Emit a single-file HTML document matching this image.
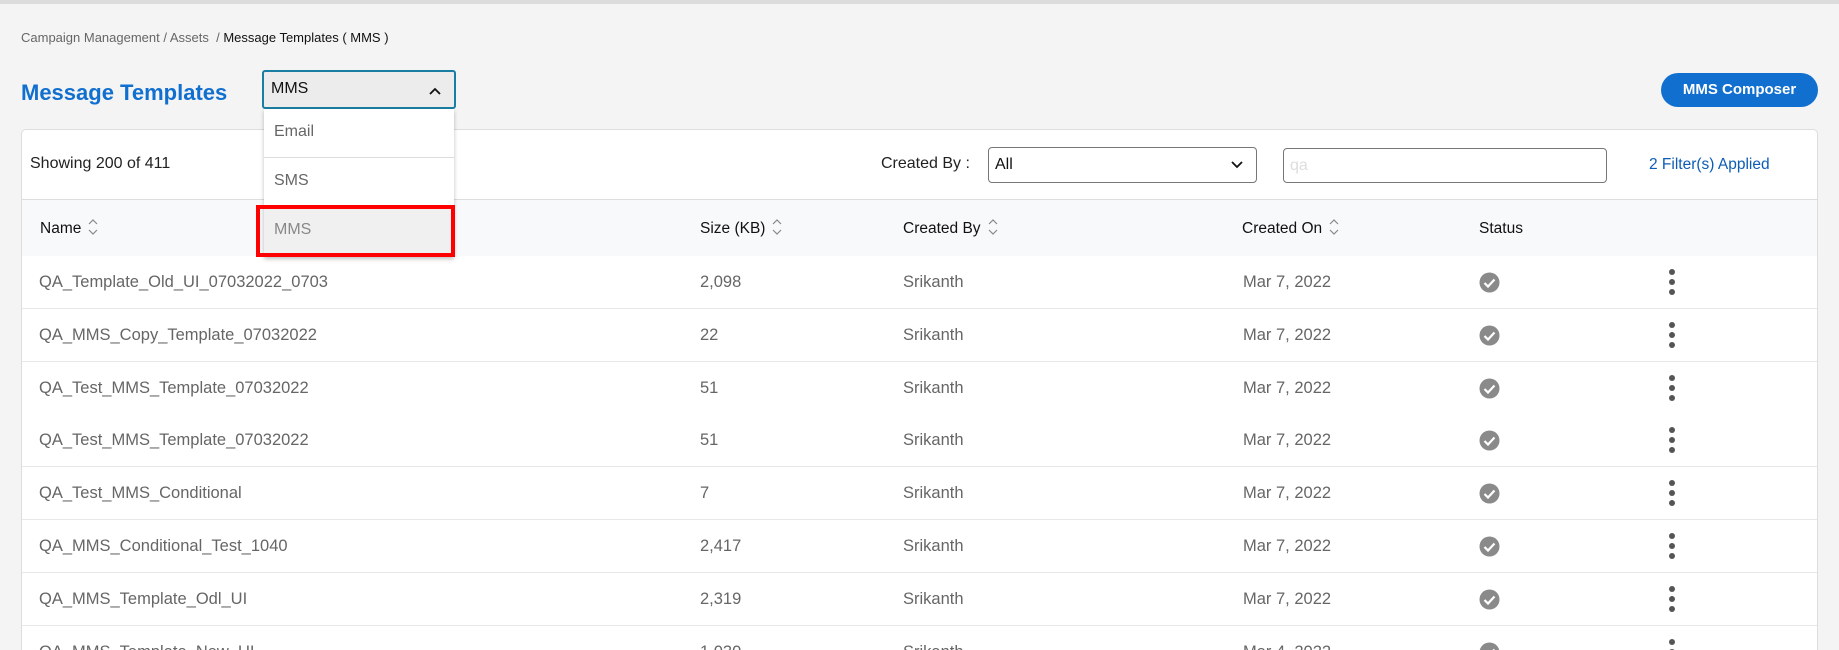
<!DOCTYPE html>
<html><head><meta charset="utf-8"><style>
*{box-sizing:border-box;margin:0;padding:0}
html{width:1839px;height:650px;overflow:hidden}
body{width:1839px;height:650px;overflow:hidden;background:#f4f4f4;font-family:"Liberation Sans",Arial,sans-serif;position:relative}
.topline{position:absolute;left:0;top:0;width:1839px;height:4px;background:#dcdcdc}
.abs{position:absolute}
.crumb{left:21px;top:30px;font-size:13px;color:#666}
.crumb b{color:#111;font-weight:normal}
.title{left:21px;top:80px;font-size:22px;font-weight:bold;color:#1170cf}
.sel{left:262px;top:70px;width:194px;height:39px;border:2px solid #1a7ea3;border-radius:3px;background:#ececec;font-size:16px;color:#111;padding:8px 7px}
.btn{left:1661px;top:73px;width:157px;height:34px;border-radius:17px;background:#1170cf;color:#fff;font-weight:bold;font-size:15px;text-align:center;line-height:34px}
.card{left:21px;top:129px;width:1797px;height:530px;background:#fff;border:1px solid #ddd;border-radius:5px}
.top{position:absolute;left:0;top:0;width:100%;height:70px;border-bottom:1px solid #ddd}
.hdr{position:absolute;left:0;top:70px;width:100%;height:57px;background:#f8f9fb;border-bottom:1px solid #e6e6e6}
.row{position:absolute;left:0;width:100%;height:53px;border-bottom:1px solid #e8e8e8}
.c{position:absolute;font-size:16.5px;color:#666;top:17px}
.h{position:absolute;font-size:15.5px;color:#111;top:20px}
.sort{display:inline-block;vertical-align:middle;margin-left:6px;margin-top:-4px}
.dd{left:264px;top:109px;width:190px;height:148px;background:#fff;box-shadow:0 2px 4px rgba(0,0,0,.25)}
.dd div{height:49px;border-bottom:1px solid #ddd;font-size:16px;color:#666;padding:14px 10px}
</style></head><body>
<div class="topline"></div>
<div class="abs crumb">Campaign Management / Assets &nbsp;/ <b>Message Templates ( MMS )</b></div>
<div class="abs title">Message Templates</div>
<div class="abs btn">MMS Composer</div>
<div class="abs card">
 <div class="top">
  <div class="abs" style="left:8px;top:25px;font-size:16px;color:#222">Showing 200 of 411</div>
  <div class="abs" style="left:859px;top:25px;font-size:16px;color:#222">Created By :</div>
  <div class="abs" style="left:966px;top:17px;width:269px;height:36px;border:1px solid #777;border-radius:4px;padding:8px 6px;font-size:16px;color:#111">All
   <svg class="abs" style="right:12px;top:12px" width="14" height="10" viewBox="0 0 14 10"><path d="M2 2l5 5 5-5" fill="none" stroke="#111" stroke-width="1.8"/></svg></div>
  <div class="abs" style="left:1261px;top:18px;width:324px;height:35px;border:1px solid #777;border-radius:4px;padding:8px 6px;font-size:16px;color:#ddd">qa</div>
  <div class="abs" style="left:1627px;top:26px;font-size:15.5px;color:#0d5cb5">2 Filter(s) Applied</div>
 </div>
 <div class="hdr">
  <div class="h" style="left:18px">Name<svg class="sort" width="12" height="18" viewBox="0 0 12 18"><path d="M2 6l4-4 4 4M2 12l4 4 4-4" fill="none" stroke="#888" stroke-width="1.2"/></svg></div>
  <div class="h" style="left:678px">Size (KB)<svg class="sort" width="12" height="18" viewBox="0 0 12 18"><path d="M2 6l4-4 4 4M2 12l4 4 4-4" fill="none" stroke="#888" stroke-width="1.2"/></svg></div>
  <div class="h" style="left:881px">Created By<svg class="sort" width="12" height="18" viewBox="0 0 12 18"><path d="M2 6l4-4 4 4M2 12l4 4 4-4" fill="none" stroke="#888" stroke-width="1.2"/></svg></div>
  <div class="h" style="left:1220px">Created On<svg class="sort" width="12" height="18" viewBox="0 0 12 18"><path d="M2 6l4-4 4 4M2 12l4 4 4-4" fill="none" stroke="#888" stroke-width="1.2"/></svg></div>
  <div class="h" style="left:1457px">Status</div>
 </div>
</div>
<div id="rows"></div>
<div class="abs sel">MMS<svg class="abs" style="right:12px;top:14px" width="14" height="10" viewBox="0 0 14 10"><path d="M2 8l5-5 5 5" fill="none" stroke="#111" stroke-width="1.8"/></svg></div>
<div class="abs dd"><div>Email</div><div>SMS</div><div style="background:#f0f0f0;border:none;color:#888">MMS</div></div>
<div class="abs" style="left:256px;top:205px;width:199px;height:52px;border:4px solid #f00"></div>
<script>
var d=[["QA_Template_Old_UI_07032022_0703","2,098","Mar 7, 2022"],["QA_MMS_Copy_Template_07032022","22","Mar 7, 2022"],["QA_Test_MMS_Template_07032022","51","Mar 7, 2022"],["QA_Test_MMS_Template_07032022","51","Mar 7, 2022"],["QA_Test_MMS_Conditional","7","Mar 7, 2022"],["QA_MMS_Conditional_Test_1040","2,417","Mar 7, 2022"],["QA_MMS_Template_Odl_UI","2,319","Mar 7, 2022"],["QA_MMS_Template_New_UI","1,030","Mar 4, 2022"]];
var h="";
d.forEach(function(r,i){var t=256+i*52.8;
h+='<div class="abs row" style="left:22px;width:1795px;top:'+t+'px;background:#fff">'+
'<div class="c" style="left:17px">'+r[0]+'</div><div class="c" style="left:678px">'+r[1]+'</div><div class="c" style="left:881px">Srikanth</div><div class="c" style="left:1221px">'+r[2]+'</div>'+
'<svg class="abs" style="left:1457px;top:16px" width="21" height="21" viewBox="0 0 21 21"><circle cx="10.5" cy="10.5" r="10" fill="#8a8a8a"/><path d="M5.5 11l3.5 3.5 6.5-7" fill="none" stroke="#fff" stroke-width="2.2"/></svg>'+
'<svg class="abs" style="left:1646px;top:12px" width="8" height="28" viewBox="0 0 8 28"><circle cx="4" cy="4" r="3" fill="#555"/><circle cx="4" cy="14" r="3" fill="#555"/><circle cx="4" cy="24" r="3" fill="#555"/></svg></div>';});
document.getElementById("rows").innerHTML=h;
</script>
</body></html>
